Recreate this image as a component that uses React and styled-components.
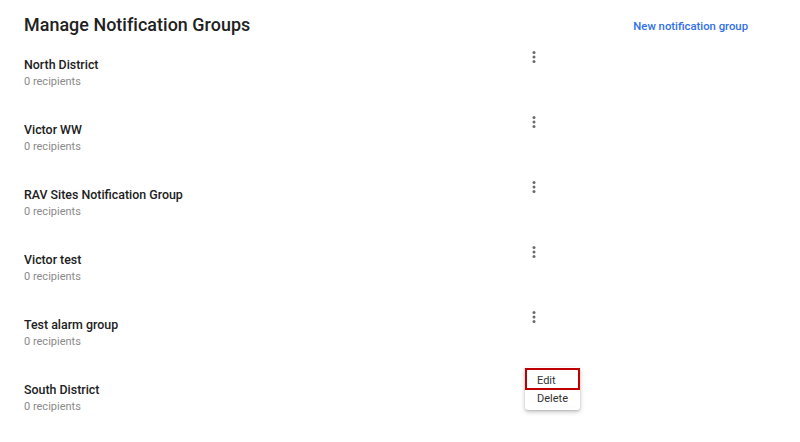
import React from "react";
import styled, { createGlobalStyle } from "styled-components";

const GlobalStyle = createGlobalStyle`
  html, body {
    margin: 0;
    padding: 0;
    background: #ffffff;
    font-family: Roboto, "Liberation Sans", Arial, sans-serif;
  }
`;

const Page = styled.div`
  width: 800px;
  height: 442px;
  overflow: hidden;
  position: relative;
  background: #fff;
`;

const Header = styled.div`
  display: flex;
  align-items: center;
  justify-content: space-between;
  height: 48px;
  padding: 0 52px 0 24px;
`;

const Title = styled.h1`
  margin: 0;
  font-size: 17.9px;
  font-weight: 500;
  color: #212121;
  letter-spacing: 0.05px;
`;

const NewLink = styled.a`
  font-size: 11.3px;
  font-weight: 500;
  color: #2f6fe8;
  text-decoration: none;
  margin-top: 5px;
  cursor: pointer;
`;

const List = styled.div`
  display: flex;
  flex-direction: column;
  padding-left: 24px;
  width: 520px;
`;

const Row = styled.div`
  position: relative;
  display: flex;
  justify-content: space-between;
  align-items: flex-start;
  height: 65px;
`;

const Info = styled.div`
  display: flex;
  flex-direction: column;
  padding-top: 9px;
`;

const Name = styled.div`
  font-size: 12.4px;
  font-weight: 500;
  line-height: 16px;
  color: #212121;
`;

const Count = styled.div`
  font-size: 11px;
  line-height: 17px;
  color: #8a8a8a;
`;

const MoreButton = styled.button`
  width: 18px;
  height: 18px;
  padding: 0;
  margin-right: 1px;
  border: none;
  background: transparent;
  color: #6b6b6b;
  display: flex;
  align-items: center;
  justify-content: center;
  cursor: pointer;
`;

const Menu = styled.div`
  position: absolute;
  top: -6px;
  right: -36px;
  width: 55px;
  padding: 1px 0 4px;
  background: #fff;
  border-radius: 3px;
  box-shadow: 0 2px 5px rgba(0, 0, 0, 0.22), 0 1px 2px rgba(0, 0, 0, 0.12);
  z-index: 2;
`;

const MenuItem = styled.div`
  box-sizing: content-box;
  font-size: 11px;
  line-height: 15px;
  height: 15px;
  color: #333;
  padding: ${(p) => (p.$active ? "3px 0 0 10px" : "1px 0 0 12px")};
  border: ${(p) => (p.$active ? "2px solid #c00000" : "none")};
  cursor: pointer;
`;

const DotsIcon = () => (
  <svg width="18" height="18" viewBox="0 0 24 24" fill="currentColor">
    <circle cx="12" cy="6" r="2" />
    <circle cx="12" cy="12" r="2" />
    <circle cx="12" cy="18" r="2" />
  </svg>
);

const groups = [
  "North District",
  "Victor WW",
  "RAV Sites Notification Group",
  "Victor test",
  "Test alarm group",
  "South District",
];

export default function App() {
  return (
    <>
      <GlobalStyle />
      <Page>
        <Header>
          <Title>Manage Notification Groups</Title>
          <NewLink>New notification group</NewLink>
        </Header>
        <List>
          {groups.map((name, i) => {
            const open = i === groups.length - 1;
            return (
              <Row key={name}>
                <Info>
                  <Name>{name}</Name>
                  <Count>0 recipients</Count>
                </Info>
                <MoreButton aria-label="More">
                  <DotsIcon />
                </MoreButton>
                {open && (
                  <Menu>
                    <MenuItem $active>Edit</MenuItem>
                    <MenuItem>Delete</MenuItem>
                  </Menu>
                )}
              </Row>
            );
          })}
        </List>
      </Page>
    </>
  );
}
